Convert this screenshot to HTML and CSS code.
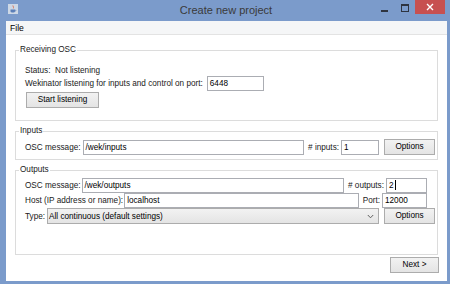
FILE: index.html
```html
<!DOCTYPE html>
<html>
<head>
<meta charset="utf-8">
<title>Create new project</title>
<link rel="stylesheet" href="styles.css">
</head>
<body>
<div class="frame">
  <div class="titlebar">
    <svg class="app-icon" width="10" height="10" viewBox="0 0 10 10">
      <rect x="0" y="0" width="10" height="10" fill="#cdd8e6"/>
      <path d="M5 1 C3.8 2.5 6.2 3.2 4.8 5 C6.8 3.6 5.2 2.6 5 1 Z" fill="#e0552a"/>
      <path d="M2.5 5.6 H7 V7.2 C7 8.2 6 8.6 4.8 8.6 C3.5 8.6 2.5 8.2 2.5 7.2 Z" fill="#5b7fb8"/>
      <path d="M7 6 C8.2 6 8.2 7.2 7 7.3" stroke="#5b7fb8" stroke-width="0.7" fill="none"/>
    </svg>
    <div class="title">Create new project</div>
    <div class="controls">
      <span class="ctl-min"></span>
      <span class="ctl-max"></span>
      <span class="ctl-close">
        <svg width="8" height="8" viewBox="0 0 8 8"><path d="M1 1 L7 7 M7 1 L1 7" stroke="#fff" stroke-width="1.4"/></svg>
      </span>
    </div>
  </div>
  <div class="client">
    <div class="menubar"><span class="menu">File</span></div>
    <div class="content">
      <fieldset class="group">
        <legend>Receiving OSC</legend>
        <div class="body recv">
          <div class="line status">Status:&nbsp; Not listening</div>
          <div class="line port-row">
            <span>Wekinator listening for inputs and control on port:</span>
            <div class="field port">6448</div>
          </div>
          <button class="btn start">Start listening</button>
        </div>
      </fieldset>

      <fieldset class="group inputs">
        <legend>Inputs</legend>
        <div class="body inputs-body">
          <div class="row">
            <span>OSC message:</span>
            <div class="field grow osc-in">/wek/inputs</div>
            <span class="lbl-r">#&nbsp;inputs:</span>
            <div class="field num-in">1</div>
            <button class="btn options">Options</button>
          </div>
        </div>
      </fieldset>

      <fieldset class="group outputs">
        <legend>Outputs</legend>
        <div class="body outputs-body">
          <div class="row r15 inset">
            <span>OSC message:</span>
            <div class="field grow osc-out">/wek/outputs</div>
            <span class="lbl-r">#&nbsp;outputs:</span>
            <div class="field num-out">2<span class="caret"></span></div>
          </div>
          <div class="row r15 inset">
            <span>Host (IP address or name):</span>
            <div class="field grow host">localhost</div>
            <span class="lbl-r">Port:</span>
            <div class="field port-out">12000</div>
          </div>
          <div class="row">
            <span>Type:</span>
            <div class="combo grow">
              <span class="combo-text">All continuous (default settings)</span>
              <svg class="chev" width="7" height="5" viewBox="0 0 7 5"><path d="M0.8 1 L3.5 3.8 L6.2 1" stroke="#606060" stroke-width="1" fill="none"/></svg>
            </div>
            <button class="btn options">Options</button>
          </div>
        </div>
      </fieldset>

      <div class="footer">
        <button class="btn next">Next &gt;</button>
      </div>
    </div>
  </div>
</div>
</body>
</html>
```
FILE: styles.css
```css
html, body {
  margin: 0;
  padding: 0;
}
body {
  width: 450px;
  height: 284px;
  overflow: hidden;
  background: #7b9bcb;
  font-family: "Liberation Sans", Arial, sans-serif;
  font-size: 8.2px;
  color: #1a1a1a;
}
.frame {
  width: 450px;
  height: 284px;
  display: flex;
  flex-direction: column;
}
.titlebar {
  height: 21px;
  flex: none;
  display: grid;
  grid-template-columns: 1fr auto 1fr;
  align-items: start;
}
.app-icon {
  margin: 4px 0 0 8px;
}
.title {
  font-size: 11px;
  line-height: 20px;
  color: #3a3a3a;
  padding-left: 2px;
}
.controls {
  justify-self: end;
  display: flex;
  align-items: flex-start;
  margin-right: 5px;
}
.ctl-min {
  width: 7px;
  height: 2px;
  background: #2e3440;
  margin-top: 10px;
}
.ctl-max {
  width: 6px;
  height: 5px;
  border: 1px solid #2e3440;
  border-top-width: 2px;
  margin: 4px 0 0 13px;
}
.ctl-close {
  width: 30px;
  height: 14px;
  background: #c75050;
  margin-left: 6px;
  display: flex;
  align-items: center;
  justify-content: center;
}
.client {
  height: 260px;
  margin: 0 3px 0 6px;
  background: #ffffff;
  display: flex;
  flex-direction: column;
}
.menubar {
  height: 13px;
  flex: none;
  background: #f5f6f7;
  border-bottom: 1px solid #e3e3e3;
  display: flex;
  align-items: center;
}
.menu {
  margin-left: 4px;
  font-size: 8.6px;
  color: #000;
  margin-top: 1px;
}
.content {
  padding-top: 10px;
  display: flex;
  flex-direction: column;
}
.group {
  margin: 0 9px;
  padding: 0;
  min-width: 0;
  border: 1px solid #dcdcdc;
}
.group legend {
  margin-left: 3px;
  padding: 0 1px;
  line-height: 10px;
  height: 10px;
}
.group.inputs, .group.outputs {
  margin-top: 5px;
}
.body.recv {
  padding: 11px 9px 12px 9px;
  display: flex;
  flex-direction: column;
  align-items: flex-start;
}
.line {
  display: flex;
  align-items: center;
}
.status {
  height: 10px;
  line-height: 10px;
}
.port-row {
  height: 15px;
  gap: 4px;
}
.field {
  box-sizing: border-box;
  height: 15px;
  border: 1px solid #abadb3;
  background: #fff;
  padding: 0 2px;
  line-height: 13px;
  white-space: nowrap;
  overflow: hidden;
  color: #000;
}
.field.port { width: 57px; }
.btn {
  box-sizing: border-box;
  height: 16px;
  padding: 0;
  margin: 0;
  border: 1px solid #acacac;
  background: linear-gradient(#f2f2f2, #e4e4e4);
  font-family: inherit;
  font-size: inherit;
  color: #000;
  line-height: 14px;
}
.btn.start {
  width: 73px;
  margin: 1px 0 0 1px;
}
.row {
  display: flex;
  align-items: center;
  height: 16px;
  white-space: nowrap;
}
.row.r15 { height: 15px; }
.row.inset { margin-right: 8px; }
.grow { flex: 1; min-width: 0; }
.inputs-body {
  padding: 3px 2px 4px 9px;
}
.outputs-body {
  padding: 3px 2px 30px 9px;
}
.osc-in { margin-left: 2px; }
.lbl-r { margin: 0 2px 0 4px; }
.num-in { width: 38px; }
.options { width: 51px; margin-left: 5px; }
.osc-out { margin-left: 1px; }
.num-out { width: 41px; }
.host { margin-left: 1px; }
.port-out { width: 45px; }
.caret {
  display: inline-block;
  width: 1px;
  height: 10px;
  background: #000;
  vertical-align: -2px;
  margin-left: 1px;
}
.combo {
  box-sizing: border-box;
  height: 16px;
  margin-left: 2px;
  border: 1px solid #acacac;
  background: linear-gradient(#f2f2f2, #e4e4e4);
  display: flex;
  align-items: center;
  padding: 0 4px 0 1px;
}
.combo-text { flex: 1; color: #000; }
.chev { flex: none; margin-right: 0; }
.footer {
  display: flex;
  justify-content: flex-end;
  margin: 2px 8px 0 0;
}
.btn.next { width: 49px; }
```
